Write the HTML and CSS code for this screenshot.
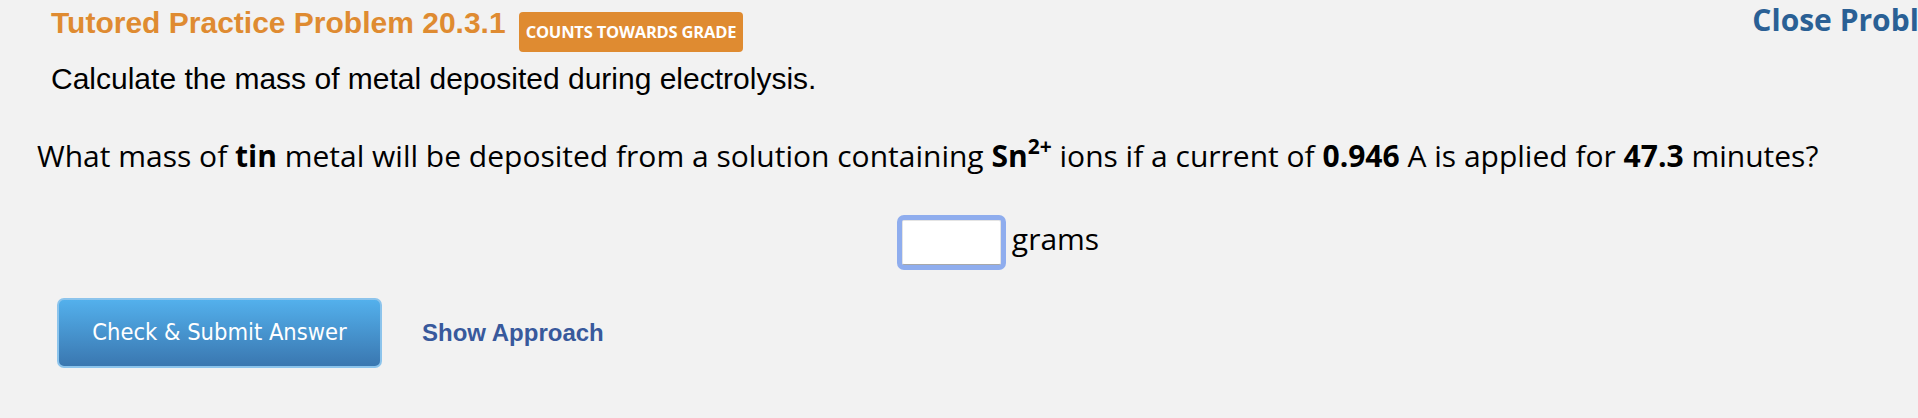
FILE: index.html
```html
<!DOCTYPE html>
<html lang="en">
<head>
<meta charset="utf-8">
<title>Tutored Practice Problem 20.3.1</title>
<link rel="stylesheet" href="styles.css">
</head>
<body>
<div class="page">
  <header class="head">
    <div class="title-group">
      <h1 class="title">Tutored Practice Problem 20.3.1</h1>
      <span class="badge">COUNTS TOWARDS GRADE</span>
    </div>
    <a class="close" href="#">Close Problem</a>
  </header>
  <p class="task">Calculate the mass of metal deposited during electrolysis.</p>
  <p class="question">What mass of <b>tin</b> metal will be deposited from a solution containing <b>Sn<sup>2+</sup></b> ions if a current of <b>0.946</b> A is applied for <b>47.3</b> minutes?</p>
  <div class="answer">
    <span class="ring"><input class="field" type="text" aria-label="mass in grams"></span>
    <span class="unit">grams</span>
  </div>
  <div class="actions">
    <button class="submit" type="button">Check &amp; Submit Answer</button>
    <a class="approach" href="#">Show Approach</a>
  </div>
</div>
</body>
</html>
```

FILE: styles.css
```css
html, body {
  margin: 0;
  padding: 0;
  background: #f2f2f2;
  overflow: hidden;
}

.page {
  width: 1996px;
}

.head {
  display: flex;
  justify-content: space-between;
  align-items: flex-start;
  padding: 0 30px 0 51px;
}

.title-group {
  display: flex;
  align-items: flex-start;
  gap: 13px;
}

.title {
  margin: 8px 0 0;
  font: 700 30px/1 "Liberation Sans", Arial, sans-serif;
  color: #df8b31;
}

.badge {
  margin-top: 12px;
  height: 40px;
  box-sizing: border-box;
  padding: 0 7px;
  display: flex;
  align-items: center;
  background: #df8b31;
  border-radius: 4px;
  color: #fff;
  font: 700 16.5px/1 "Open Sans", sans-serif;
  letter-spacing: -0.2px;
}

.close {
  margin-top: 5px;
  font: 700 30px/1 "Open Sans", sans-serif;
  color: #2a6095;
  text-decoration: none;
  white-space: nowrap;
}

.task {
  margin: 12px 0 0 51px;
  font: 400 30px/1 "Liberation Sans", Arial, sans-serif;
  color: #000;
}

.question {
  margin: 47px 0 0 37px;
  font: 400 30px/1 "Open Sans", sans-serif;
  color: #000;
  white-space: nowrap;
}

.question b {
  font-weight: 700;
}

.question sup {
  font-size: 21px;
  line-height: 0;
  vertical-align: 0;
  position: relative;
  top: -13px;
}

.answer {
  margin-top: 44px;
  display: flex;
  justify-content: center;
  align-items: flex-start;
  gap: 6px;
}

.ring {
  display: block;
  width: 109px;
  height: 55px;
  box-sizing: border-box;
  border: 5px solid #8fadee;
  border-radius: 7px;
  background: #8fadee;
}

.field {
  display: block;
  width: 99px;
  height: 45px;
  box-sizing: border-box;
  margin: 0;
  border: 1px solid #e4e4e4;
  border-bottom-color: #a8a8a8;
  border-radius: 2px;
  background: #fff;
  outline: none;
}

.unit {
  margin-top: 9px;
  font: 400 30px/1 "Open Sans", sans-serif;
  color: #000;
}

.actions {
  margin: 28px 0 0 57px;
  display: flex;
  align-items: center;
  gap: 40px;
}

.submit {
  width: 325px;
  height: 70px;
  box-sizing: border-box;
  border: 2px solid #8cc4ec;
  border-radius: 7px;
  background: linear-gradient(#53b0ec, #3a77b0);
  color: #fff;
  font: 400 23.5px/1 "DejaVu Sans Condensed", "DejaVu Sans", sans-serif;
  padding: 0;
}

.approach {
  font: 700 24px/1 "Liberation Sans", Arial, sans-serif;
  color: #38599c;
  text-decoration: none;
}
```
